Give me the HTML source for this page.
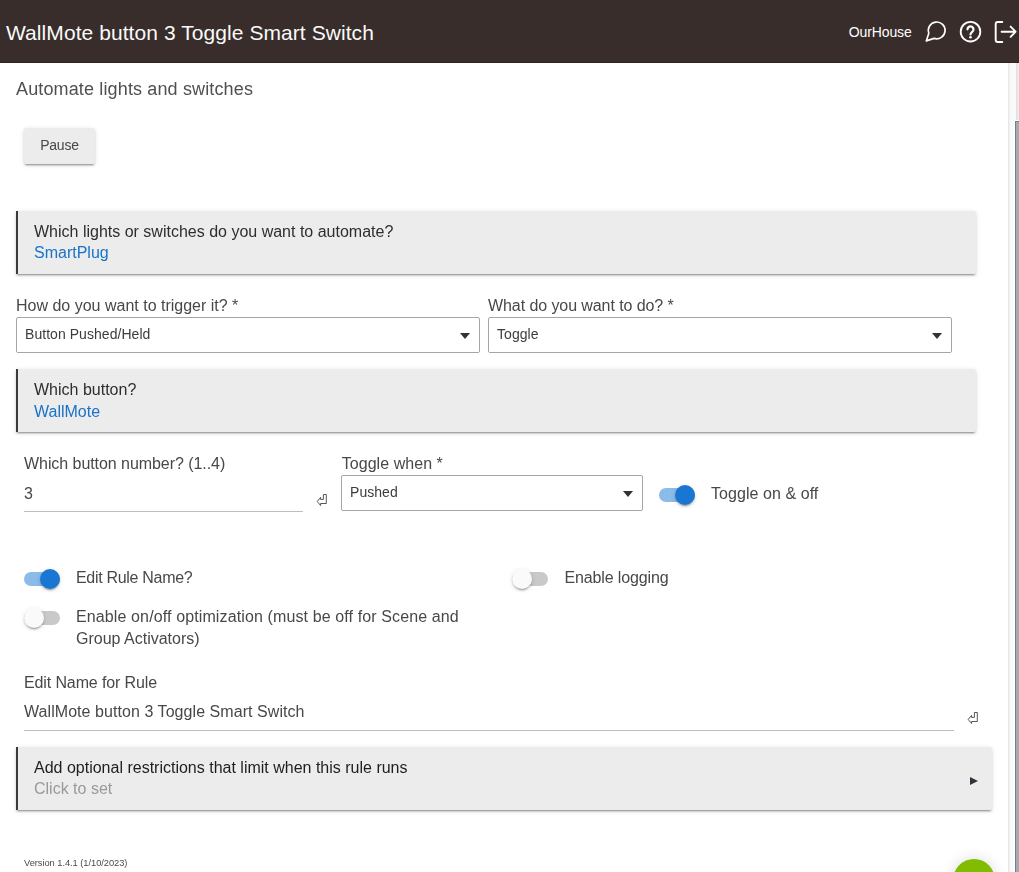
<!DOCTYPE html>
<html lang="en">
<head>
<meta charset="utf-8">
<title>WallMote button 3 Toggle Smart Switch</title>
<style>
*{box-sizing:border-box;margin:0;padding:0}
html,body{width:1019px;height:872px;overflow:hidden;background:#fff}
body{font-family:"Liberation Sans",Arial,sans-serif;color:#424242;position:relative;font-size:16px}
.abs{position:absolute;white-space:nowrap}
#main{position:absolute;left:0;top:0;width:1019px;height:872px;will-change:transform}
#hdr{position:absolute;left:0;top:0;width:1019px;height:63px;background:#382d2b;color:#fff;border-bottom:1px solid #302423}
#title{left:6px;top:21px;font-size:21px;line-height:24px;letter-spacing:.07px;color:#fafafa}
#hub{left:848.8px;top:23.3px;font-size:14px;line-height:18px;color:#fff;letter-spacing:-.12px}
.hico{position:absolute;top:20px}
#sub{left:16px;top:77px;font-size:18px;line-height:24px;color:#505050;letter-spacing:.14px}
#pause{position:absolute;left:24px;top:128px;width:71px;height:36px;background:#ececec;border-radius:2px;
 box-shadow:0 2px 2px 0 rgba(0,0,0,.14),0 3px 1px -2px rgba(0,0,0,.2),0 1px 5px 0 rgba(0,0,0,.12);
 font-size:14px;line-height:34px;text-align:center;color:#484848;border:0;letter-spacing:-.2px;font-family:inherit;display:block;padding:0 0 2px 0}
.panel{position:absolute;left:16px;width:960px;height:63px;background:#ececec;border-left:2px solid #3a3a3a;
 border-radius:0 2px 2px 0;box-shadow:0 2px 2px 0 rgba(0,0,0,.14),0 3px 1px -2px rgba(0,0,0,.2),0 1px 5px 0 rgba(0,0,0,.12);padding:10px 0 0 16px;font-size:16px;line-height:21px;color:#2e2e2e}
.panel a{color:#1873c9;text-decoration:none;display:block}
.panel .muted{color:#999;display:block}
.lbl{font-size:16px;line-height:20px;color:#484848}
.sel{position:absolute;height:36px;border:1px solid #a6a6a6;border-radius:2px;background:#fff;font-size:14px;line-height:32px;padding-left:8px;color:#3c3c3c;white-space:nowrap;letter-spacing:.05px}
.sel:after{content:"";position:absolute;right:8.7px;top:15px;border-left:5.8px solid transparent;border-right:5.8px solid transparent;border-top:6px solid #333}
.uline{position:absolute;height:1px;background:#bdbdbd}
.sw{position:absolute;width:36px;height:14px;border-radius:7px;background:#c9c9c9}
.sw i{position:absolute;left:-.2px;top:-3px;width:20px;height:20px;border-radius:50%;background:#fafafa;box-shadow:0 2px 2px 0 rgba(0,0,0,.14),0 3px 1px -2px rgba(0,0,0,.2),0 1px 5px 0 rgba(0,0,0,.12)}
.sw.on{background:#8bbbe8}
.sw.on i{left:16px;background:#1976d2}
.ret{font-size:13px;color:#333;font-family:"DejaVu Sans",sans-serif}
#ver{left:24px;top:858px;font-size:9.3px;line-height:11px;color:#4a4a4a;letter-spacing:-.04px}
#fab{position:absolute;left:952.65px;top:858.8px;width:42.8px;height:42.8px;border-radius:50%;background:#81bc00;box-shadow:0 0 12px 3px rgba(0,0,0,.09)}
#sbar{position:absolute;left:1008px;top:63px;width:11px;height:809px;background:linear-gradient(to right,#e8e8e8 0,#e8e8e8 1px,#f1f1f1 1px,#f1f1f1 2px,#f8f8f8 2px,#f8f8f8 3px,#fafafa 3px,#fafafa 8px,#e0e0e0 8px,#e0e0e0 9px,#e6e6e6 9px,#e6e6e6 10px,#ebebeb 10px)}
#sthumb{position:absolute;left:1015px;top:121px;width:4px;height:751px;background:#a9a9a9;border-left:1px solid #6d7f95;border-top:1px solid #6d7f95;box-shadow:-1px 0 0 #fff,0 -1px 0 #fff,-1px -1px 0 #fff}
</style>
</head>
<body>
<header id="hdr">
  <div class="abs" id="title">WallMote button 3 Toggle Smart Switch</div>
  <div class="abs" id="hub">OurHouse</div>
  <svg id="hicons" style="position:absolute;left:919px;top:12px" width="100" height="40" viewBox="0 0 100 40" fill="none" stroke="#fff" stroke-linecap="round" stroke-linejoin="round">
    <path d="M15.10 26.39L7.3 28.9L9.81 21.27A8.4 8.4 0 1 1 15.10 26.39Z" stroke-width="1.65"/>
    <circle cx="51.5" cy="19.7" r="9.8" stroke-width="1.85"/>
    <path d="M48.5 17.3a3 3 0 1 1 4.7 2.5c-1.1.8-1.7 1.3-1.7 2.7" stroke-width="2.2"/>
    <circle cx="51.5" cy="25.2" r="1.3" fill="#fff" stroke="none"/>
    <path d="M83.3 10H78.7a2 2 0 0 0-2 2V28a2 2 0 0 0 2 2H83.3" stroke-width="1.9"/>
    <path d="M82.6 19.7H96.3M91.6 14.6L96.6 19.7L91.6 24.8" stroke-width="1.9"/>
  </svg>
</header>

<main id="main">
<div class="abs" id="sub">Automate lights and switches</div>
<button id="pause">Pause</button>

<div class="panel" style="top:211px">Which lights or switches do you want to automate?<a>SmartPlug</a></div>

<div class="abs lbl" style="left:16px;top:296px">How do you want to trigger it? *</div>
<div class="abs lbl" style="left:488px;top:296px;letter-spacing:-.08px">What do you want to do? *</div>
<div class="sel" style="left:16px;top:317px;width:464px">Button Pushed/Held</div>
<div class="sel" style="left:488px;top:317px;width:464px">Toggle</div>

<div class="panel" style="top:369px">Which button?<a style="position:relative;top:1px">WallMote</a></div>

<div class="abs lbl" style="left:24px;top:454px;letter-spacing:-.06px">Which button number? (1..4)</div>
<div class="abs lbl" style="left:24px;top:484px">3</div>
<div class="uline" style="left:24px;top:511px;width:279px"></div>
<svg class="reti" style="position:absolute;left:316px;top:493px" width="12" height="14" viewBox="0 0 12 14" fill="none" stroke="#444" stroke-width=".9" stroke-linejoin="miter"><path d="M7.4 1.5H10.3V10.5H4.6V12.5L1.2 8.4L4.6 4.4V6.4H7.4Z"/></svg>
<div class="abs lbl" style="left:341.7px;top:454px;letter-spacing:.05px">Toggle when *</div>
<div class="sel" style="left:341px;top:475px;width:302px">Pushed</div>
<div class="sw on" style="left:659px;top:488px"><i></i></div>
<div class="abs lbl" style="left:711px;top:484px;letter-spacing:.06px">Toggle on &amp; off</div>

<div class="sw on" style="left:24px;top:572px"><i></i></div>
<div class="abs lbl" style="left:76px;top:568px;letter-spacing:-.3px">Edit Rule Name?</div>
<div class="sw" style="left:512px;top:572px"><i></i></div>
<div class="abs lbl" style="left:564.5px;top:568px;letter-spacing:-.13px">Enable logging</div>
<div class="sw" style="left:24px;top:611px"><i></i></div>
<div class="abs lbl" style="left:76px;top:606px;line-height:22px;letter-spacing:.12px">Enable on/off optimization (must be off for Scene and<br><span style="letter-spacing:0">Group Activators)</span></div>

<div class="abs lbl" style="left:24px;top:673px;letter-spacing:-.12px">Edit Name for Rule</div>
<div class="abs lbl" style="left:24px;top:702px;letter-spacing:.06px">WallMote button 3 Toggle Smart Switch</div>
<div class="uline" style="left:24px;top:730px;width:930px"></div>
<svg class="reti" style="position:absolute;left:967px;top:711px" width="12" height="14" viewBox="0 0 12 14" fill="none" stroke="#444" stroke-width=".9" stroke-linejoin="miter"><path d="M7.4 1.5H10.3V10.5H4.6V12.5L1.2 8.4L4.6 4.4V6.4H7.4Z"/></svg>

<div class="panel" style="top:747px;width:976px;color:#1e1e1e">Add optional restrictions that limit when this rule runs<span class="muted">Click to set</span>
  <span style="position:absolute;left:952.2px;top:29.6px;width:0;height:0;border-left:8.2px solid #30333a;border-top:4.8px solid transparent;border-bottom:4.8px solid transparent"></span></div>

<div class="abs" id="ver">Version 1.4.1 (1/10/2023)</div>
</main>
<div id="fab"></div>
<div id="sbar"></div>
<div id="sthumb"></div>
</body>
</html>
